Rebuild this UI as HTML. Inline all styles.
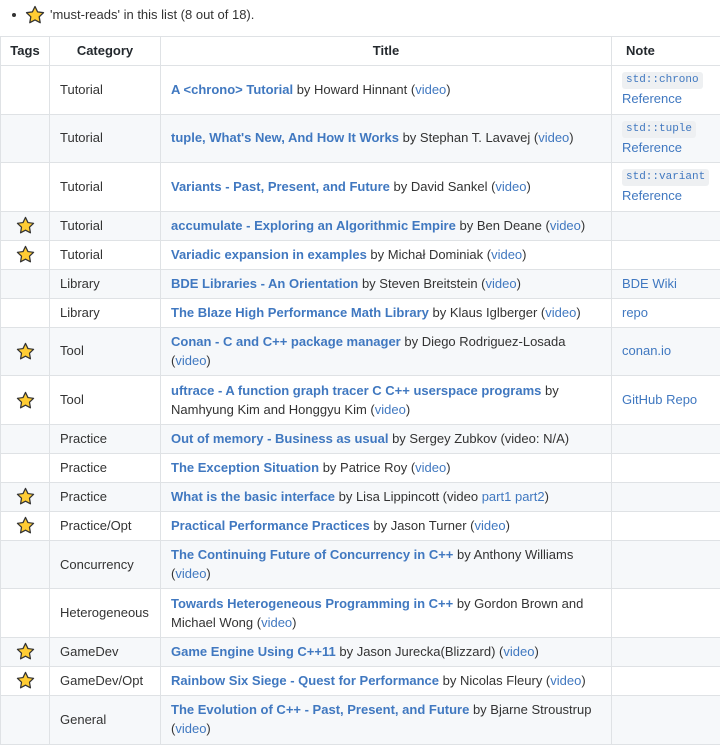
<!DOCTYPE html>
<html><head><meta charset="utf-8"><style>
body{margin:0;background:#fff;font-family:"Liberation Sans",Arial,sans-serif;font-size:13px;color:#333;width:720px;height:743px;overflow:hidden;position:relative}
.top{position:absolute;left:12px;top:5px;height:20px;line-height:20px;display:flex;align-items:center}
.top .dot{width:4px;height:4px;border-radius:50%;background:#333;margin-right:9px}
table{position:absolute;left:0;top:36px;border-collapse:collapse;table-layout:fixed;width:760px}
td,th{border:1px solid #dfe2e5;padding:4px 10px 5px;line-height:19px;height:19px;vertical-align:middle}
th{font-weight:bold;text-align:center;color:#24292e}
tr:nth-child(odd) td{background:#f6f8fa}
td.t{text-align:center;padding:0}
a{color:#4078c0;text-decoration:none}
a.b{font-weight:bold}
code{font-family:"Liberation Mono",monospace;font-size:11px;background:#eef0f2;padding:1px 4px;border-radius:3px;color:#4078c0;line-height:15px;display:inline-block;vertical-align:top;margin-top:2px}
.nt{display:block;height:19px;line-height:19px}
svg{display:block;margin:auto}
tr.d td{height:38.57px}
</style></head><body>
<div class="top"><span class="dot"></span><svg width="20" height="20" viewBox="0 0 20 20" style="margin:0 5px 0 0"><path d="M10 1.5l2.6 5.4 5.9.8-4.3 4.1 1 5.9L10 14.9l-5.2 2.8 1-5.9-4.3-4.1 5.9-.8z" fill="#ffcc33" stroke="#333" stroke-width="1.3" stroke-linejoin="round"/></svg>'must-reads' in this list (8 out of 18).</div>
<table>
<colgroup><col style="width:49px"><col style="width:111px"><col style="width:451px"><col style="width:149px"></colgroup>
<tr><th style="padding:4px 0 5px">Tags</th><th>Category</th><th>Title</th><th style="text-align:left;padding-left:14px">Note</th></tr>
<tr class="d"><td></td><td>Tutorial</td><td><a class="b">A &lt;chrono&gt; Tutorial</a> by Howard Hinnant (<a>video</a>)</td><td><span class="nt"><code>std::chrono</code></span><a>Reference</a></td></tr>
<tr class="d"><td></td><td>Tutorial</td><td><a class="b">tuple, What's New, And How It Works</a> by Stephan T. Lavavej (<a>video</a>)</td><td><span class="nt"><code>std::tuple</code></span><a>Reference</a></td></tr>
<tr class="d"><td></td><td>Tutorial</td><td><a class="b">Variants - Past, Present, and Future</a> by David Sankel (<a>video</a>)</td><td><span class="nt"><code>std::variant</code></span><a>Reference</a></td></tr>
<tr><td class="t">S</td><td>Tutorial</td><td><a class="b">accumulate - Exploring an Algorithmic Empire</a> by Ben Deane (<a>video</a>)</td><td></td></tr>
<tr><td class="t">S</td><td>Tutorial</td><td><a class="b">Variadic expansion in examples</a> by Michał Dominiak (<a>video</a>)</td><td></td></tr>
<tr><td></td><td>Library</td><td><a class="b">BDE Libraries - An Orientation</a> by Steven Breitstein (<a>video</a>)</td><td><a>BDE Wiki</a></td></tr>
<tr><td></td><td>Library</td><td><a class="b">The Blaze High Performance Math Library</a> by Klaus Iglberger (<a>video</a>)</td><td><a>repo</a></td></tr>
<tr class="d"><td class="t">S</td><td>Tool</td><td><a class="b">Conan - C and C++ package manager</a> by Diego Rodriguez-Losada (<a>video</a>)</td><td><a>conan.io</a></td></tr>
<tr class="d"><td class="t">S</td><td>Tool</td><td><a class="b">uftrace - A function graph tracer C C++ userspace programs</a> by Namhyung Kim and Honggyu Kim (<a>video</a>)</td><td><a>GitHub Repo</a></td></tr>
<tr><td></td><td>Practice</td><td><a class="b">Out of memory - Business as usual</a> by Sergey Zubkov (video: N/A)</td><td></td></tr>
<tr><td></td><td>Practice</td><td><a class="b">The Exception Situation</a> by Patrice Roy (<a>video</a>)</td><td></td></tr>
<tr><td class="t">S</td><td>Practice</td><td><a class="b">What is the basic interface</a> by Lisa Lippincott (video <a>part1</a> <a>part2</a>)</td><td></td></tr>
<tr><td class="t">S</td><td>Practice/Opt</td><td><a class="b">Practical Performance Practices</a> by Jason Turner (<a>video</a>)</td><td></td></tr>
<tr class="d"><td></td><td>Concurrency</td><td><a class="b">The Continuing Future of Concurrency in C++</a> by Anthony Williams (<a>video</a>)</td><td></td></tr>
<tr class="d"><td></td><td>Heterogeneous</td><td><a class="b">Towards Heterogeneous Programming in C++</a> by Gordon Brown and Michael Wong (<a>video</a>)</td><td></td></tr>
<tr><td class="t">S</td><td>GameDev</td><td><a class="b">Game Engine Using C++11</a> by Jason Jurecka(Blizzard) (<a>video</a>)</td><td></td></tr>
<tr><td class="t">S</td><td>GameDev/Opt</td><td><a class="b">Rainbow Six Siege - Quest for Performance</a> by Nicolas Fleury (<a>video</a>)</td><td></td></tr>
<tr class="d"><td></td><td>General</td><td><a class="b">The Evolution of C++ - Past, Present, and Future</a> by Bjarne Stroustrup (<a>video</a>)</td><td></td></tr>
</table>
<script>
document.querySelectorAll('td.t').forEach(function(td){td.innerHTML='<svg width="19" height="19" viewBox="0 0 20 20"><path d="M10 1.5l2.6 5.4 5.9.8-4.3 4.1 1 5.9L10 14.9l-5.2 2.8 1-5.9-4.3-4.1 5.9-.8z" fill="#ffcc33" stroke="#333" stroke-width="1.3" stroke-linejoin="round"/></svg>';});
</script>
</body></html>
